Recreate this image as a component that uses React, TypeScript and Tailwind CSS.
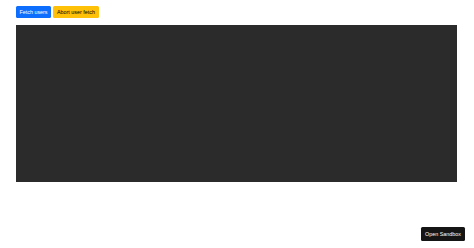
export default function App() {
  return (
    <div className="w-[474px] h-[248px] bg-white relative overflow-hidden" style={{ fontFamily: '"Liberation Sans", Arial, sans-serif' }}>
      <div className="pt-[6px] px-[16px] flex flex-col">
        <div className="flex gap-[2px] h-[12px]">
          <button className="h-[12px] w-[35px] rounded-[1.5px] bg-[#0d6efd] text-white text-[5.4px] leading-[12px] flex items-center justify-center">Fetch users</button>
          <button className="h-[12px] w-[46px] rounded-[1.5px] bg-[#ffc107] text-black text-[5.4px] leading-[12px] flex items-center justify-center">Abort user fetch</button>
        </div>
        <div className="mt-[7px] w-[441px] h-[157px] bg-[#2b2b2b]"></div>
      </div>
      <button className="absolute right-[9px] bottom-[7px] w-[44px] h-[14px] rounded-[1.5px] bg-[#151515] text-white text-[5.4px] flex items-center justify-center">Open Sandbox</button>
    </div>
  );
}
